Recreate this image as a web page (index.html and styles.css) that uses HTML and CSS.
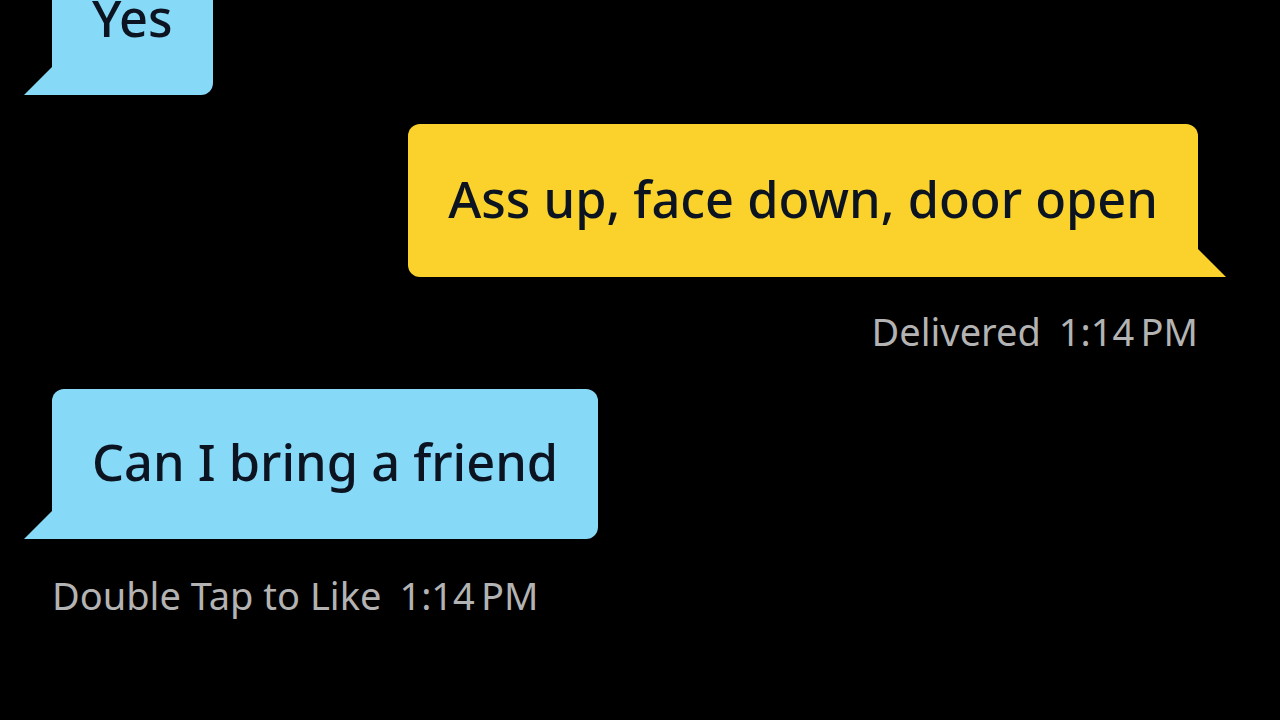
FILE: index.html
```html
<!DOCTYPE html>
<html lang="en">
<head>
<meta charset="utf-8">
<title>Chat</title>
<link rel="stylesheet" href="styles.css">
</head>
<body>
<main class="chat">
  <div class="msg in first">
    <div class="bubble blue">Yes</div>
  </div>
  <div class="msg out">
    <div class="bubble yellow">Ass up, face down, door open</div>
    <div class="meta"><span>Delivered</span><span>1:14&#8201;PM</span></div>
  </div>
  <div class="msg in">
    <div class="bubble blue">Can I bring a friend</div>
    <div class="meta"><span>Double Tap to Like</span><span>1:14&#8201;PM</span></div>
  </div>
</main>
</body>
</html>
```
FILE: styles.css
```css
html, body {
  margin: 0;
  padding: 0;
  background: #000;
}
body {
  width: 1280px;
  height: 720px;
  overflow: hidden;
  font-family: "Noto Sans", "Open Sans", sans-serif;
}
.chat {
  display: flex;
  flex-direction: column;
  padding: 0 82px 0 52px;
}
.msg {
  display: flex;
  flex-direction: column;
}
.msg.in { align-items: flex-start; }
.msg.out { align-items: flex-end; margin-top: 29px; }
.msg.in.first { margin-top: -55px; }
.msg.in:not(.first) { margin-top: 39px; }
.msg.in .meta { margin-top: 37px; }

.bubble {
  position: relative;
  box-sizing: border-box;
  height: 150px;
  display: flex;
  align-items: center;
  padding: 0 40px 3px;
  font-size: 50.5px;
  font-weight: 500;
  line-height: 1;
  color: #0b1420;
  border-radius: 12px;
}
.yellow { height: 153px; }
.blue { background: #87d9f8; }
.yellow { background: #fad22b; }

.in .bubble { border-bottom-left-radius: 0; }
.out .bubble { border-bottom-right-radius: 0; }

.bubble::after {
  content: "";
  position: absolute;
  bottom: 0;
  width: 28px;
  height: 28px;
  background: inherit;
}
.in .bubble::after {
  left: -28px;
  clip-path: polygon(100% 0, 100% 100%, 0 100%);
}
.out .bubble::after {
  right: -28px;
  clip-path: polygon(0 0, 100% 100%, 0 100%);
}

.meta {
  display: flex;
  gap: 18px;
  margin-top: 35px;
  font-size: 38px;
  line-height: 1;
  color: #b3b3b3;
}
```
